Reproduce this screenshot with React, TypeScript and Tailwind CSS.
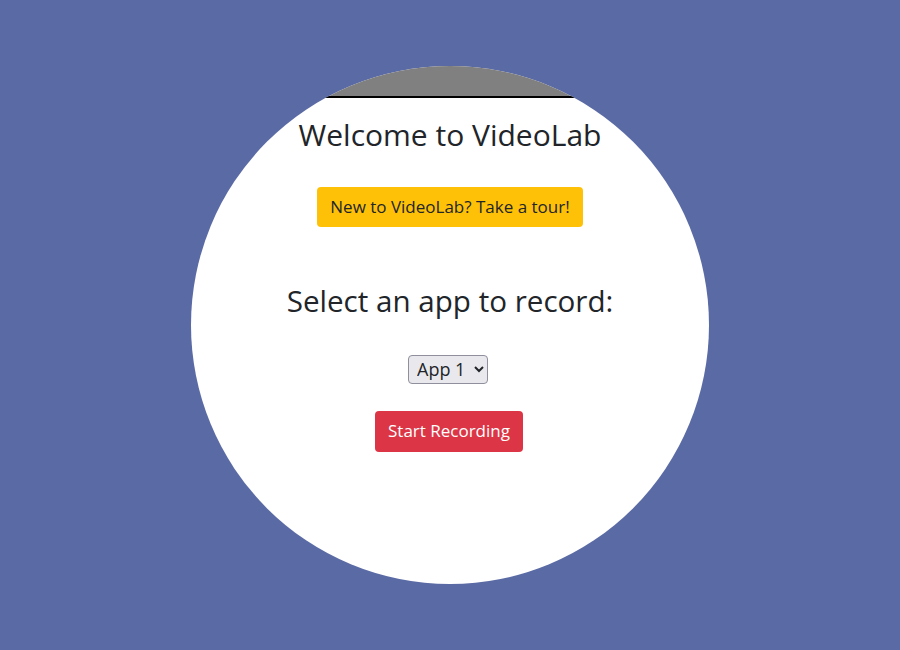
export default function App() {
  return (
    <div className="min-h-screen w-full bg-[#5a6aa4] flex items-center justify-center font-['Open_Sans',sans-serif] text-[#212529]">
      <div className="w-[518px] h-[518px] rounded-full bg-white overflow-hidden flex flex-col items-center">
        {/* top bar */}
        <div className="w-full h-[32px] bg-[#808080] border-b-2 border-black shrink-0" />

        <h2 className="mt-[19px] text-[30px] leading-[1.2] font-normal">Welcome to VideoLab</h2>

        <button className="mt-[34px] bg-[#ffc107] text-[#212529] text-[17px] px-[13px] h-[40px] rounded-[4px]">
          New to VideoLab? Take a tour!
        </button>

        <h2 className="mt-[56px] text-[29.6px] leading-[1.2] font-normal">Select an app to record:</h2>

        <select className="mt-[36px] mr-[4px] h-[29px] w-[80px] text-[18px] bg-[#e9e9ed] border border-[#8f8f9d] rounded-[4px] px-[4px]">
          <option>App 1</option>
          <option>App 2</option>
          <option>App 3</option>
        </select>

        <button className="mt-[27px] mr-[2px] bg-[#dc3545] text-white text-[17px] px-[13px] h-[41px] rounded-[4px]">
          Start Recording
        </button>
      </div>
    </div>
  );
}
